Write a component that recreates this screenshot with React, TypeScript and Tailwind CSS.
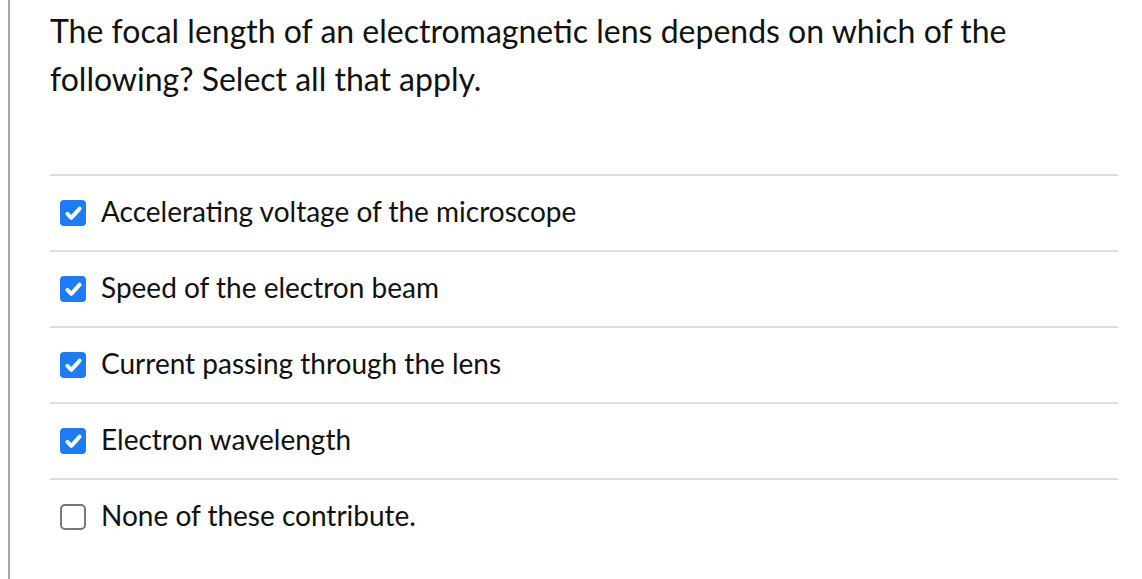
const options = [
  { label: "Accelerating voltage of the microscope", checked: true },
  { label: "Speed of the electron beam", checked: true },
  { label: "Current passing through the lens", checked: true },
  { label: "Electron wavelength", checked: true },
  { label: "None of these contribute.", checked: false },
];

const Box = ({ checked }: { checked: boolean }) =>
  checked ? (
    <span className="flex h-[26px] w-[26px] shrink-0 items-center justify-center rounded-[4px] bg-[#1b7cf5]">
      <svg viewBox="0 0 24 24" className="h-[21px] w-[21px]" fill="none" stroke="white" strokeWidth="4.5" strokeLinecap="round" strokeLinejoin="round">
        <path d="M5 12.5l4.5 4.5L19 6.5" />
      </svg>
    </span>
  ) : (
    <span className="h-[26px] w-[26px] shrink-0 rounded-[5px] border-2 border-[#777777] bg-white" />
  );

export default function App() {
  return (
    <div className="min-h-[579px] bg-white pl-2 font-['Lato',sans-serif] text-[#111111]">
      <div className="min-h-[579px] border-l-2 border-[#a6a6a6] pl-[40px] pr-6">
        <p className="pt-[7px] text-[32px] leading-[48px]">
          The focal length of an electromagnetic lens depends on which of the following? Select all that apply.
        </p>

        <div className="mt-[71px]">
          {options.map((o) => (
            <label
              key={o.label}
              className="flex h-[76px] items-center gap-[15px] border-t-2 border-[#dedede] pl-[10px] text-[28px]"
            >
              <Box checked={o.checked} />
              <span className="mb-[4px]">{o.label}</span>
            </label>
          ))}
        </div>
      </div>
    </div>
  );
}
